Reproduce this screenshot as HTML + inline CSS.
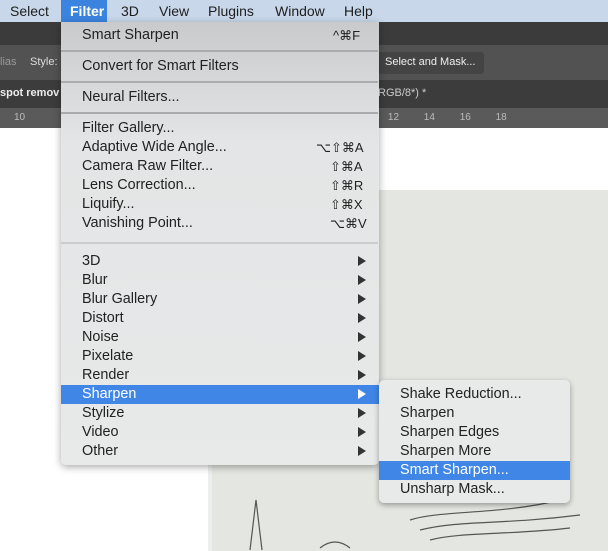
<!DOCTYPE html><html><head><style>
*{margin:0;padding:0;box-sizing:border-box}
body{width:608px;height:551px;overflow:hidden;position:relative;background:#fff;font-family:"Liberation Sans",sans-serif;}
.a{position:absolute}
.mb span{position:absolute;top:3px;font-size:14px;color:#1e1e1e}
.mi{position:absolute;left:82px;font-size:14.4px;color:#222;line-height:19px;height:19px;margin-top:1px}
.sc{position:absolute;font-size:13px;color:#222;line-height:19px;margin-top:1px}
.ar{position:absolute;left:358px;width:0;height:0;border-left:8px solid #333;border-top:5px solid transparent;border-bottom:5px solid transparent}
.sep{position:absolute;left:61px;width:317px;height:2px;background:#a9abae}
.si{position:absolute;left:400px;font-size:14.4px;color:#222;line-height:19px;margin-top:1px}
</style></head><body>
<div class="a" style="left:0;top:0;width:608px;height:22px;background:#c8d8ea"></div>
<div class="a" style="left:61px;top:0;width:46px;height:22px;background:#3a84df"></div>
<div class="mb">
<span style="left:10px">Select</span><span style="left:70px;color:#fff;font-weight:bold">Filter</span><span style="left:121px">3D</span><span style="left:159px">View</span><span style="left:208px">Plugins</span><span style="left:275px">Window</span><span style="left:344px">Help</span></div>
<div class="a" style="left:0;top:22px;width:608px;height:23px;background:#3b3b3b"></div>
<div class="a" style="left:0;top:45px;width:608px;height:35px;background:#525252"></div>
<div class="a" style="left:0;top:56px;font-size:11px;color:#999">lias</div>
<div class="a" style="left:30px;top:56px;font-size:11px;color:#ddd">Style:</div>
<div class="a" style="left:378px;top:52px;width:106px;height:22px;background:#444;border-radius:3px"></div>
<div class="a" style="left:385px;top:56px;font-size:11px;color:#eee">Select and Mask...</div>
<div class="a" style="left:0;top:80px;width:608px;height:28px;background:#3c3c3c"></div>
<div class="a" style="left:0;top:87px;font-size:11px;color:#eee;font-weight:bold">spot remov</div>
<div class="a" style="left:378px;top:87px;font-size:11px;color:#ccc">RGB/8*) *</div>
<div class="a" style="left:0;top:108px;width:608px;height:20px;background:#5a5a5a"></div>
<div class="a" style="left:14px;top:112px;font-size:10px;color:#bbb">10</div>
<div class="a" style="left:352px;top:112px;font-size:10px;color:#bbb;word-spacing:22px">10 12 14 16 18</div>
<div class="a" style="left:212px;top:190px;width:396px;height:361px;background:#e4e6e1"></div>
<div class="a" style="left:208px;top:128px;width:4px;height:423px;background:#eee"></div>
<svg class="a" style="left:240px;top:490px" width="368" height="61"><g stroke="#555" fill="none" stroke-width="1.2"><path d="M10 60 L16 10 L22 60"/><path d="M170 30 C200 20 260 25 320 10"/><path d="M180 40 C220 30 260 35 340 25"/><path d="M190 50 C220 42 270 45 330 38"/><path d="M80 58 C90 50 100 50 110 58"/></g></svg>
<div class="a" style="left:61px;top:22px;width:318px;height:443px;background:linear-gradient(#c9cacc,#e3e5e6 120px,#e8e9e9);border-radius:0 0 5px 5px;box-shadow:0 2px 8px rgba(0,0,0,.35)"></div>
<div class="sep" style="top:50px"></div><div class="sep" style="top:81px"></div><div class="sep" style="top:112px"></div><div class="sep" style="top:242px;background:#ccc"></div>
<div class="a" style="left:61px;top:385px;width:318px;height:19px;background:#3f86e6"></div>
<div class="mi" style="top:25px">Smart Sharpen</div><div class="sc" style="left:333px;top:25px">^⌘F</div>
<div class="mi" style="top:56px">Convert for Smart Filters</div>
<div class="mi" style="top:87px">Neural Filters...</div>
<div class="mi" style="top:118px">Filter Gallery...</div>
<div class="mi" style="top:137px">Adaptive Wide Angle...</div><div class="sc" style="left:316px;top:137px">⌥⇧⌘A</div>
<div class="mi" style="top:156px">Camera Raw Filter...</div><div class="sc" style="left:330px;top:156px">⇧⌘A</div>
<div class="mi" style="top:175px">Lens Correction...</div><div class="sc" style="left:330px;top:175px">⇧⌘R</div>
<div class="mi" style="top:194px">Liquify...</div><div class="sc" style="left:330px;top:194px">⇧⌘X</div>
<div class="mi" style="top:213px">Vanishing Point...</div><div class="sc" style="left:330px;top:213px">⌥⌘V</div>
<div class="mi" style="top:251px">3D</div><div class="ar" style="top:256px"></div>
<div class="mi" style="top:270px">Blur</div><div class="ar" style="top:275px"></div>
<div class="mi" style="top:289px">Blur Gallery</div><div class="ar" style="top:294px"></div>
<div class="mi" style="top:308px">Distort</div><div class="ar" style="top:313px"></div>
<div class="mi" style="top:327px">Noise</div><div class="ar" style="top:332px"></div>
<div class="mi" style="top:346px">Pixelate</div><div class="ar" style="top:351px"></div>
<div class="mi" style="top:365px">Render</div><div class="ar" style="top:370px"></div>
<div class="mi" style="top:384px;color:#fff">Sharpen</div><div class="ar" style="top:389px;border-left-color:#fff"></div>
<div class="mi" style="top:403px">Stylize</div><div class="ar" style="top:408px"></div>
<div class="mi" style="top:422px">Video</div><div class="ar" style="top:427px"></div>
<div class="mi" style="top:441px">Other</div><div class="ar" style="top:446px"></div>
<div class="a" style="left:379px;top:380px;width:191px;height:123px;background:#e8e9e9;border-radius:5px;box-shadow:0 2px 6px rgba(0,0,0,.35)"></div>
<div class="a" style="left:379px;top:461px;width:191px;height:19px;background:#3f86e6"></div>
<div class="si" style="top:384px">Shake Reduction...</div>
<div class="si" style="top:403px">Sharpen</div>
<div class="si" style="top:422px">Sharpen Edges</div>
<div class="si" style="top:441px">Sharpen More</div>
<div class="si" style="top:460px;color:#fff">Smart Sharpen...</div>
<div class="si" style="top:479px">Unsharp Mask...</div>
</body></html>
